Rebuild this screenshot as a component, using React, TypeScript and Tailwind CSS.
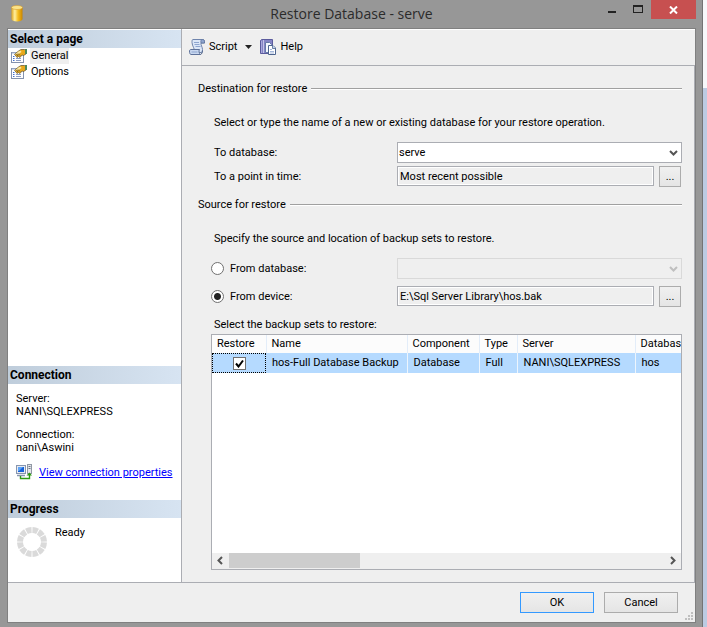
import { useState } from 'react';
import type { ReactNode } from 'react';

/* ── Icons ─────────────────────────────────────────────────────────────── */

function DatabaseIcon() {
  return (
    <svg width="12" height="17" viewBox="0 0 12 17" aria-hidden="true">
      <defs>
        <linearGradient id="gold" x1="0" x2="1">
          <stop offset="0" stopColor="#dda520" />
          <stop offset="0.3" stopColor="#fff0a0" />
          <stop offset="0.6" stopColor="#f5bc1c" />
          <stop offset="1" stopColor="#c98500" />
        </linearGradient>
      </defs>
      <path d="M0.500 2.500v11.500c0 1.300 2.400 2.500 5.500 2.500s5.500-1.200 5.500-2.500v-11.500z" fill="url(#gold)" />
      <ellipse cx="6" cy="2.500" rx="5.500" ry="2" fill="#fbe38a" stroke="#d9a030" strokeWidth="0.600" />
    </svg>
  );
}

function PageIcon() {
  return (
    <svg width="16" height="14" viewBox="0 0 16 14" aria-hidden="true">
      <rect x="0.500" y="3.500" width="12" height="10" fill="#fff" stroke="#8492ae" />
      <path d="M1 4h11" stroke="#a9b8d4" />
      <path d="M2 7.500h1.500M2 9.500h1.500M2 11.500h1.500" stroke="#3e6fd0" />
      <path d="M5 9.500h5M5 11.500h5" stroke="#8e9ec4" />
      <path d="M3.500 5.500l4-3.500 2.500-1.500h3.500l1.500 1.500v3l-2.500 1.500-1.500-.500-2 2.500-1.500-1-1.500 1-1-1.500z" fill="#e9a91c" stroke="#5e522f" strokeWidth="0.700" />
      <path d="M4 5.500l3.500-3 2-1 1 1.500-3 2z" fill="#fbe9a6" />
      <path d="M5.500 5l1.500 2M7 4.500l2 2" stroke="#5e522f" strokeWidth="0.900" />
      <rect x="14" y="0" width="2" height="5" fill="#4e8a5c" />
    </svg>
  );
}

function ScriptIcon() {
  return (
    <svg width="16" height="16" viewBox="0 0 16 16" aria-hidden="true">
      <path d="M4 0.500h9.500c1.500 0 2 1 2 2v1.500h-3.500c-.500 2 1.500 4 1.500 6.500 0 2-1 3-1 3h-7c1-3-2.500-6.500-2.500-10 0-1.500 0-3 1-3z" fill="#dbe6f7" stroke="#6f84ac" />
      <path d="M12 4c-.500-2 0-3.500 1.500-3.500s2 1 2 2v1.500z" fill="#8ea5cf" stroke="#5d7199" strokeWidth="0.800" />
      <path d="M0.500 12c0-1 .700-1.500 1.500-1.500h8.500c-1 1.500-.500 4 1 5h-9.500c-1 0-1.500-1.500-1.500-3.500z" fill="#c9d8f0" stroke="#5d7199" />
      <path d="M11.500 15.500c1.500-.500 2-2.500 2-4" fill="none" stroke="#465a84" />
      <path d="M5 3.500h5M5.500 5.500h5M6.500 7.500h5M2.500 13h6" stroke="#8ea5cf" />
    </svg>
  );
}

function HelpIcon() {
  return (
    <svg width="16" height="16" viewBox="0 0 16 16" aria-hidden="true">
      <path d="M0.500 1.500l1-1h11v12h-1l-1 2h-10z" fill="#8584c4" stroke="#5b5b9d" />
      <path d="M3.500 1v13" stroke="#c4c4e8" />
      <path d="M1.500 2v12" stroke="#a9a8dc" />
      <path d="M5.500 3.500h4l2 2v8h-6z" fill="#f5f8fe" stroke="#667ba8" />
      <path d="M8.500 6.500h4.500l2.500 2.500v6.500h-7z" fill="#fff" stroke="#4d648f" />
      <path d="M12.500 6.500v3h3" fill="#c6d5ef" stroke="#4d648f" strokeWidth="0.800" />
      <path d="M10 10.500h2M10 12.500h4M10 14h4" stroke="#8da4cf" strokeWidth="0.800" />
    </svg>
  );
}

function ConnectionIcon() {
  return (
    <svg width="16" height="16" viewBox="0 0 16 16" className="shrink-0" aria-hidden="true">
      <rect x="0.500" y="1.500" width="9" height="8" fill="#e6ebf2" stroke="#8795ae" />
      <rect x="2" y="3" width="6" height="5" fill="#1661d9" />
      <path d="M2 3h5l-4 4h-1z" fill="#5fa4f7" />
      <path d="M1 11.500h8" stroke="#8795ae" strokeWidth="1.500" />
      <rect x="11.500" y="0.500" width="4" height="9" fill="#e4e7ec" stroke="#9299a5" />
      <path d="M12.500 2.500h2M12.500 4.500h2" stroke="#6d7584" />
      <path d="M4.500 12v2.500h9v-5" fill="none" stroke="#2d9a12" strokeWidth="1.400" />
      <path d="M10.500 11.500l3-3 2.500 3z" fill="#2d9a12" />
    </svg>
  );
}

function ProgressRing() {
  return (
    <svg width="30" height="30" viewBox="0 0 30 30" aria-hidden="true">
      <circle cx="15" cy="15" r="12" fill="none" stroke="#dadada" strokeWidth="6" pathLength="120" strokeDasharray="8.500 1.500" strokeDashoffset="-0.750" />
    </svg>
  );
}

const chevrons = {
  down: 'M1 2l3.500 3.500L8 2',
  left: 'M6 1L2.500 4.500L6 8',
  right: 'M3 1l3.500 3.500L3 8',
};

function Chevron({ dir, color = '#555' }: { dir: keyof typeof chevrons; color?: string }) {
  return (
    <svg width="9" height="9" viewBox="0 0 9 9" aria-hidden="true">
      <path d={chevrons[dir]} fill="none" stroke={color} strokeWidth="2" />
    </svg>
  );
}

/* ── Small building blocks ─────────────────────────────────────────────── */

function PaneTitle({ children }: { children: ReactNode }) {
  return (
    <h2 className="h-[18px] bg-linear-to-r from-[#bfcddb] to-[#d7e4f2] pl-[2px] text-[12px] leading-[18px] font-bold">
      {children}
    </h2>
  );
}

function GroupTitle({ children }: { children: ReactNode }) {
  return (
    <div className="flex h-4 items-center gap-1">
      <h3>{children}</h3>
      <div className="h-[2px] flex-1 border-t border-[#a0a0a0] bg-white" />
    </div>
  );
}

function ComboBox({ id, options, label, disabled = false }: { id: string; options: string[]; label?: string; disabled?: boolean }) {
  return (
    <div className="relative">
      <select
        id={id}
        aria-label={label}
        disabled={disabled}
        className="block h-[21px] w-full appearance-none border border-[#abadb3] bg-white pl-px outline-none disabled:border-[#d9d9d9] disabled:bg-[#efefef]"
      >
        {options.map((o) => (
          <option key={o}>{o}</option>
        ))}
      </select>
      <span className="pointer-events-none absolute top-[7px] right-1">
        <Chevron dir="down" color={disabled ? '#bfbfbf' : '#555'} />
      </span>
    </div>
  );
}

function BrowseField({ id, value, label, button }: { id: string; value: string; label?: string; button: string }) {
  return (
    <div className="flex gap-[5px] pr-px">
      <input
        id={id}
        aria-label={label}
        readOnly
        value={value}
        className="h-5 min-w-0 flex-1 border border-[#abadb3] bg-[#efefef] px-[2px] shadow-[inset_0_0_0_1px_#fff] outline-none"
      />
      <button
        aria-label={button}
        className="h-[21px] w-[22px] border border-[#acacac] bg-linear-to-b from-[#f0f0f0] to-[#e5e5e5]"
      >
        ...
      </button>
    </div>
  );
}

const radioClass =
  'size-[13px] shrink-0 appearance-none rounded-full border border-[#707070] bg-white checked:bg-[radial-gradient(circle,#222_3px,#fff_4px)]';
const rowClass = 'grid grid-cols-[183px_1fr]';
const sourceRowClass = 'grid grid-cols-[186px_1fr]';
const headClass = 'border-r border-[#e3edf9] px-[5px] text-left font-normal last:border-r-0 last:pr-0';
const cellClass = 'border-r border-[#edf5fd] px-[6px] last:border-r-0';

/* ── Dialog ────────────────────────────────────────────────────────────── */

export default function App() {
  const [source, setSource] = useState('device');
  const [restore, setRestore] = useState(true);

  return (
    <div className="flex min-h-screen bg-linear-to-b from-[#f8f8fa] from-[88px] to-[#bccbe2] to-[88px] pr-1 font-[Roboto,sans-serif] text-[11px] leading-4 text-black">
      <div className="flex min-w-0 flex-1 flex-col border-r border-[#747474] bg-[#979797] pr-[6px] pb-1 pl-[7px]">
        <header className="grid h-7 grid-cols-[1fr_auto_1fr]">
          <div className="pt-[5px] pl-1">
            <DatabaseIcon />
          </div>
          <h1 className="font-['Open_Sans',sans-serif] text-[14px] leading-7 text-[#2b2b2b]">Restore Database - serve</h1>
          <div className="flex items-start justify-end">
            <button aria-label="Minimize" className="flex h-5 w-[26px] items-center justify-center pt-1">
              <span className="h-[2px] w-2 bg-[#222]" />
            </button>
            <button aria-label="Maximize" className="flex h-[18px] w-[26px] items-center justify-center">
              <span className="h-2 w-[10px] border border-t-2 border-[#222]" />
            </button>
            <button aria-label="Close" className="flex h-[19px] w-[45px] items-center justify-center bg-[#c75050]">
              <svg width="9" height="8" viewBox="0 0 9 8" aria-hidden="true">
                <path d="M1 0.500l7 7M8 0.500l-7 7" stroke="#fff" strokeWidth="2" />
              </svg>
            </button>
          </div>
        </header>

        <div className="flex flex-1 flex-col border border-[#808080] bg-[#efefef]">
          <div className="flex flex-1 border-b border-[#abadb3]">
            {/* Left: pages, connection, progress */}
            <aside className="flex w-[174px] shrink-0 flex-col border-r border-[#abadb3] bg-white pt-px">
              <nav className="flex-1">
                <PaneTitle>Select a page</PaneTitle>
                {['General', 'Options'].map((page, i) => (
                  <a key={page} href={`#${page}`} className="flex h-4 items-center gap-[3px] pl-[3px]">
                    <PageIcon />
                    <span className={i === 0 ? 'bg-[#efefef] px-px' : 'px-px'}>{page}</span>
                  </a>
                ))}
              </nav>

              <section className="h-[134px]">
                <PaneTitle>Connection</PaneTitle>
                <div className="flex flex-col gap-[10px] pt-2 pl-2 leading-[13px]">
                  <p>Server:<br />NANI\SQLEXPRESS</p>
                  <p>Connection:<br />nani\Aswini</p>
                  <a href="#properties" className="flex items-center gap-[7px] whitespace-nowrap text-[#0000ff] underline">
                    <ConnectionIcon />
                    View connection properties
                  </a>
                </div>
              </section>

              <section className="h-[82px]">
                <PaneTitle>Progress</PaneTitle>
                <div className="flex gap-2 pt-[7px] pl-[9px]">
                  <div className="pt-[2px]">
                    <ProgressRing />
                  </div>
                  <span>Ready</span>
                </div>
              </section>
            </aside>

            {/* Right: toolbar and restore form */}
            <div className="flex min-w-0 flex-1 flex-col">
              <div className="flex h-[37px] items-center border-t border-b border-t-white border-b-[#abadb3] pb-[2px] pl-[7px]">
                <button className="flex items-center gap-1">
                  <ScriptIcon />
                  Script
                </button>
                <button aria-label="Script options" className="px-2">
                  <svg width="7" height="4" viewBox="0 0 7 4" aria-hidden="true">
                    <path d="M0 0h7L3.500 4z" fill="#222" />
                  </svg>
                </button>
                <button className="flex items-center gap-1">
                  <HelpIcon />
                  Help
                </button>
              </div>

              <main className="flex flex-1 flex-col border-r border-[#abadb3] pt-[15px] pr-3 pb-3 pl-4">
                <GroupTitle>Destination for restore</GroupTitle>
                <div className="pt-[18px] pb-[10px] pl-4">
                  <p>Select or type the name of a new or existing database for your restore operation.</p>
                  <div className={`${rowClass} pt-[11px]`}>
                    <label htmlFor="target" className="pt-[3px]">To database:</label>
                    <ComboBox id="target" options={['serve']} />
                  </div>
                  <div className={`${rowClass} pt-[3px]`}>
                    <label htmlFor="time" className="pt-[3px]">To a point in time:</label>
                    <BrowseField id="time" value="Most recent possible" button="Choose point in time" />
                  </div>
                </div>

                <GroupTitle>Source for restore</GroupTitle>
                <div className="pt-[18px] pl-4">
                  <p>Specify the source and location of backup sets to restore.</p>
                </div>
                <div className="pt-[11px] pl-[13px]">
                  <div className={sourceRowClass}>
                    <label className="flex items-center gap-[6px]">
                      <input type="radio" name="source" className={radioClass} checked={source === 'database'} onChange={() => setSource('database')} />
                      From database:
                    </label>
                    <ComboBox id="sourceDatabase" label="Source database" options={['']} disabled={source !== 'database'} />
                  </div>
                  <div className={`${sourceRowClass} pt-[7px]`}>
                    <label className="flex items-center gap-[6px]">
                      <input type="radio" name="source" className={radioClass} checked={source === 'device'} onChange={() => setSource('device')} />
                      From device:
                    </label>
                    <BrowseField id="device" label="Source device" value="E:\Sql Server Library\hos.bak" button="Browse devices" />
                  </div>
                </div>

                <h4 className="pt-[10px] pb-px pl-4">Select the backup sets to restore:</h4>
                <div className="ml-[13px] flex flex-1 flex-col border border-[#abadb3] bg-white">
                  <div className="flex-1 overflow-hidden">
                    <table className="w-full table-fixed border-collapse whitespace-nowrap">
                      <colgroup>
                        <col className="w-[54px]" />
                        <col className="w-[141px]" />
                        <col className="w-[72px]" />
                        <col className="w-[38px]" />
                        <col className="w-[118px]" />
                        <col />
                      </colgroup>
                      <thead>
                        <tr className="h-[18px] bg-[#fcfcfc]">
                          {['Restore', 'Name', 'Component', 'Type', 'Server', 'Databas'].map((h) => (
                            <th key={h} className={headClass}>{h}</th>
                          ))}
                        </tr>
                      </thead>
                      <tbody>
                        <tr className="h-5 bg-[#b5daff]">
                          <td className="p-0 outline-1 -outline-offset-1 outline-black outline-dotted">
                            <input
                              type="checkbox"
                              aria-label="Restore hos-Full Database Backup"
                              checked={restore}
                              onChange={(e) => setRestore(e.target.checked)}
                              className="mx-auto block size-[13px] appearance-none border border-[#707070] bg-white bg-center bg-no-repeat checked:bg-[url('data:image/svg+xml,%3Csvg%20xmlns=%22http://www.w3.org/2000/svg%22%20width=%229%22%20height=%229%22%3E%3Cpath%20d=%22M1%204.500l2.500%203L8%201.500%22%20fill=%22none%22%20stroke=%22black%22%20stroke-width=%222%22/%3E%3C/svg%3E')]"
                            />
                          </td>
                          {['hos-Full Database Backup', 'Database', 'Full', 'NANI\\SQLEXPRESS', 'hos'].map((v) => (
                            <td key={v} className={cellClass}>{v}</td>
                          ))}
                        </tr>
                      </tbody>
                    </table>
                  </div>
                  <div className="flex h-4 items-start bg-[#efefef]">
                    <button aria-label="Scroll left" className="flex h-[15px] w-[17px] items-center justify-center">
                      <Chevron dir="left" />
                    </button>
                    <div className="h-[15px] flex-1">
                      <div className="h-full w-[30%] bg-[#cdcdcd]" />
                    </div>
                    <button aria-label="Scroll right" className="flex h-[15px] w-[17px] items-center justify-center">
                      <Chevron dir="right" />
                    </button>
                  </div>
                </div>
              </main>
            </div>
          </div>

          <footer className="relative flex h-[39px] justify-end gap-[10px] pt-[9px] pr-[17px]">
            <button className="h-[21px] w-[74px] border border-[#3399ff] bg-linear-to-b from-[#f0f0f0] to-[#e5e5e5]">OK</button>
            <button className="h-[21px] w-[74px] border border-[#acacac] bg-linear-to-b from-[#f0f0f0] to-[#e5e5e5]">Cancel</button>
            <svg className="absolute right-[2px] bottom-[2px]" width="8" height="8" viewBox="0 0 8 8" aria-hidden="true">
              <path d="M6 0h2v2h-2zM3 3h2v2h-2zM6 3h2v2h-2zM0 6h2v2h-2zM3 6h2v2h-2zM6 6h2v2h-2z" fill="#bfbfbf" />
            </svg>
          </footer>
        </div>
      </div>
    </div>
  );
}
